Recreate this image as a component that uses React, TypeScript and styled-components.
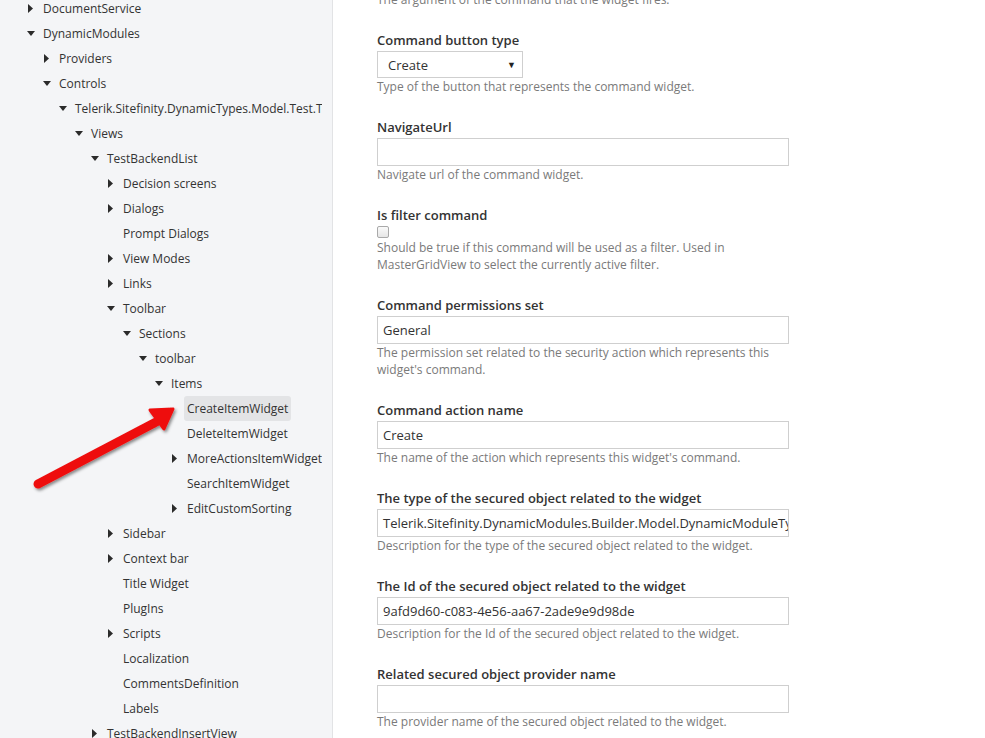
import styled, { createGlobalStyle } from 'styled-components';

const GlobalStyle = createGlobalStyle`
  html, body {
    margin: 0;
    padding: 0;
    background: #fff;
    font-family: 'Open Sans', 'Liberation Sans', sans-serif;
    font-size: 12px;
    color: #333;
  }
`;

const Page = styled.div`
  position: relative;
  display: flex;
  width: 985px;
  height: 738px;
  overflow: hidden;
`;

const Sidebar = styled.div`
  flex: 0 0 322px;
  width: 322px;
  padding-right: 10px;
  background: #f4f5f7;
  border-right: 1px solid #e2e3e5;
`;

const Tree = styled.ul`
  list-style: none;
  margin: -4px 0 0;
  padding: 0;
  overflow: hidden;
`;

const Row = styled.li<{ level: number }>`
  display: flex;
  align-items: center;
  height: 25px;
  padding-left: ${(p) => 27 + p.level * 16}px;
  white-space: nowrap;
`;

const Toggle = styled.span`
  flex: 0 0 16px;
  display: flex;
  align-items: center;
  height: 25px;
  color: #2b2b2b;
`;

const Label = styled.span<{ selected?: boolean }>`
  padding: 3px 3px;
  margin-left: -3px;
  border-radius: 3px;
  line-height: 19px;
  color: #333;
  background: ${(p) => (p.selected ? '#e3e4e6' : 'transparent')};
`;

const Main = styled.div`
  flex: 1;
  padding: 0 0 0 44px;
`;

const Block = styled.div<{ top?: boolean }>`
  margin-top: ${(p) => (p.top ? '-9px' : '24px')};
  width: 412px;
`;

const FieldLabel = styled.div`
  font-size: 13px;
  font-weight: 600;
  line-height: 17px;
  color: #333;
  margin-bottom: 2px;
`;

const TextBox = styled.div`
  box-sizing: border-box;
  height: 28px;
  width: 412px;
  border: 1px solid #cfcfcf;
  background: #fff;
  padding: 0 5px;
  font-size: 13px;
  line-height: 26px;
  white-space: nowrap;
  overflow: hidden;
  color: #333;
`;

const Select = styled.div`
  box-sizing: border-box;
  display: flex;
  align-items: center;
  justify-content: space-between;
  height: 27px;
  width: 146px;
  border: 1px solid #cfcfcf;
  background: #fff;
  padding: 0 6px 0 10px;
  font-size: 13px;
  color: #333;
`;

const Caret = styled.span`
  font-size: 9px;
  color: #222;
`;

const Check = styled.div`
  box-sizing: border-box;
  width: 12px;
  height: 12px;
  margin: 1px 0 1px 0;
  border: 1px solid #a9a9a9;
  border-radius: 2px;
  background: linear-gradient(#fafafa, #e6e6e6);
`;

const Help = styled.div`
  line-height: 17px;
  color: #7a7a7a;
`;

const ArrowLayer = styled.svg`
  position: absolute;
  left: 0;
  top: 0;
  pointer-events: none;
`;

type Node = { text: string; level: number; state?: 'open' | 'closed'; selected?: boolean };

const nodes: Node[] = [
  { text: 'DocumentService', level: 0, state: 'closed' },
  { text: 'DynamicModules', level: 0, state: 'open' },
  { text: 'Providers', level: 1, state: 'closed' },
  { text: 'Controls', level: 1, state: 'open' },
  { text: 'Telerik.Sitefinity.DynamicTypes.Model.Test.TestBackend', level: 2, state: 'open' },
  { text: 'Views', level: 3, state: 'open' },
  { text: 'TestBackendList', level: 4, state: 'open' },
  { text: 'Decision screens', level: 5, state: 'closed' },
  { text: 'Dialogs', level: 5, state: 'closed' },
  { text: 'Prompt Dialogs', level: 5 },
  { text: 'View Modes', level: 5, state: 'closed' },
  { text: 'Links', level: 5, state: 'closed' },
  { text: 'Toolbar', level: 5, state: 'open' },
  { text: 'Sections', level: 6, state: 'open' },
  { text: 'toolbar', level: 7, state: 'open' },
  { text: 'Items', level: 8, state: 'open' },
  { text: 'CreateItemWidget', level: 9, selected: true },
  { text: 'DeleteItemWidget', level: 9 },
  { text: 'MoreActionsItemWidget', level: 9, state: 'closed' },
  { text: 'SearchItemWidget', level: 9 },
  { text: 'EditCustomSorting', level: 9, state: 'closed' },
  { text: 'Sidebar', level: 5, state: 'closed' },
  { text: 'Context bar', level: 5, state: 'closed' },
  { text: 'Title Widget', level: 5 },
  { text: 'PlugIns', level: 5 },
  { text: 'Scripts', level: 5, state: 'closed' },
  { text: 'Localization', level: 5 },
  { text: 'CommentsDefinition', level: 5 },
  { text: 'Labels', level: 5 },
  { text: 'TestBackendInsertView', level: 4, state: 'closed' },
];

const TriangleIcon = ({ open }: { open: boolean }) =>
  open ? (
    <svg width="8" height="5" viewBox="0 0 8 5">
      <path d="M0 0 L8 0 L4 5 Z" fill="currentColor" />
    </svg>
  ) : (
    <svg width="5" height="9" viewBox="0 0 5 9" style={{ marginLeft: 1 }}>
      <path d="M0 0 L5 4.5 L0 9 Z" fill="currentColor" />
    </svg>
  );

const fields = [
  { label: 'Command permissions set', value: 'General', help: ['The permission set related to the security action which represents this', "widget's command."] },
  { label: 'Command action name', value: 'Create', help: ["The name of the action which represents this widget's command."] },
  { label: 'The type of the secured object related to the widget', value: 'Telerik.Sitefinity.DynamicModules.Builder.Model.DynamicModuleType', help: ['Description for the type of the secured object related to the widget.'] },
  { label: 'The Id of the secured object related to the widget', value: '9afd9d60-c083-4e56-aa67-2ade9e9d98de', help: ['Description for the Id of the secured object related to the widget.'] },
  { label: 'Related secured object provider name', value: '', help: ['The provider name of the secured object related to the widget.'] },
];

const App = () => (
  <Page>
    <GlobalStyle />
    <Sidebar>
      <Tree>
        {nodes.map((n, i) => (
          <Row key={i} level={n.level}>
            <Toggle>{n.state && <TriangleIcon open={n.state === 'open'} />}</Toggle>
            <Label selected={n.selected}>{n.text}</Label>
          </Row>
        ))}
      </Tree>
    </Sidebar>
    <Main>
      <Block top>
        <Help>The argument of the command that the widget fires.</Help>
      </Block>
      <Block>
        <FieldLabel>Command button type</FieldLabel>
        <Select>
          <span>Create</span>
          <Caret>▼</Caret>
        </Select>
        <Help>Type of the button that represents the command widget.</Help>
      </Block>
      <Block>
        <FieldLabel>NavigateUrl</FieldLabel>
        <TextBox />
        <Help>Navigate url of the command widget.</Help>
      </Block>
      <Block>
        <FieldLabel>Is filter command</FieldLabel>
        <Check />
        <Help>Should be true if this command will be used as a filter. Used in</Help>
        <Help>MasterGridView to select the currently active filter.</Help>
      </Block>
      {fields.map((f) => (
        <Block key={f.label}>
          <FieldLabel>{f.label}</FieldLabel>
          <TextBox>{f.value}</TextBox>
          {f.help.map((h) => (
            <Help key={h}>{h}</Help>
          ))}
        </Block>
      ))}
    </Main>
    <ArrowLayer width="985" height="738">
      <defs>
        <filter id="shadow" x="-20%" y="-20%" width="140%" height="140%">
          <feDropShadow dx="1.5" dy="2" stdDeviation="1.5" floodColor="#000" floodOpacity="0.45" />
        </filter>
      </defs>
      <g filter="url(#shadow)">
        <line x1="38" y1="484" x2="158" y2="421" stroke="#ee1111" strokeWidth="9" strokeLinecap="round" />
        <path d="M150 410 L173 409 L164 429 Z" fill="#ee1111" stroke="#ee1111" strokeWidth="3" strokeLinejoin="round" />
      </g>
    </ArrowLayer>
  </Page>
);

export default App;
